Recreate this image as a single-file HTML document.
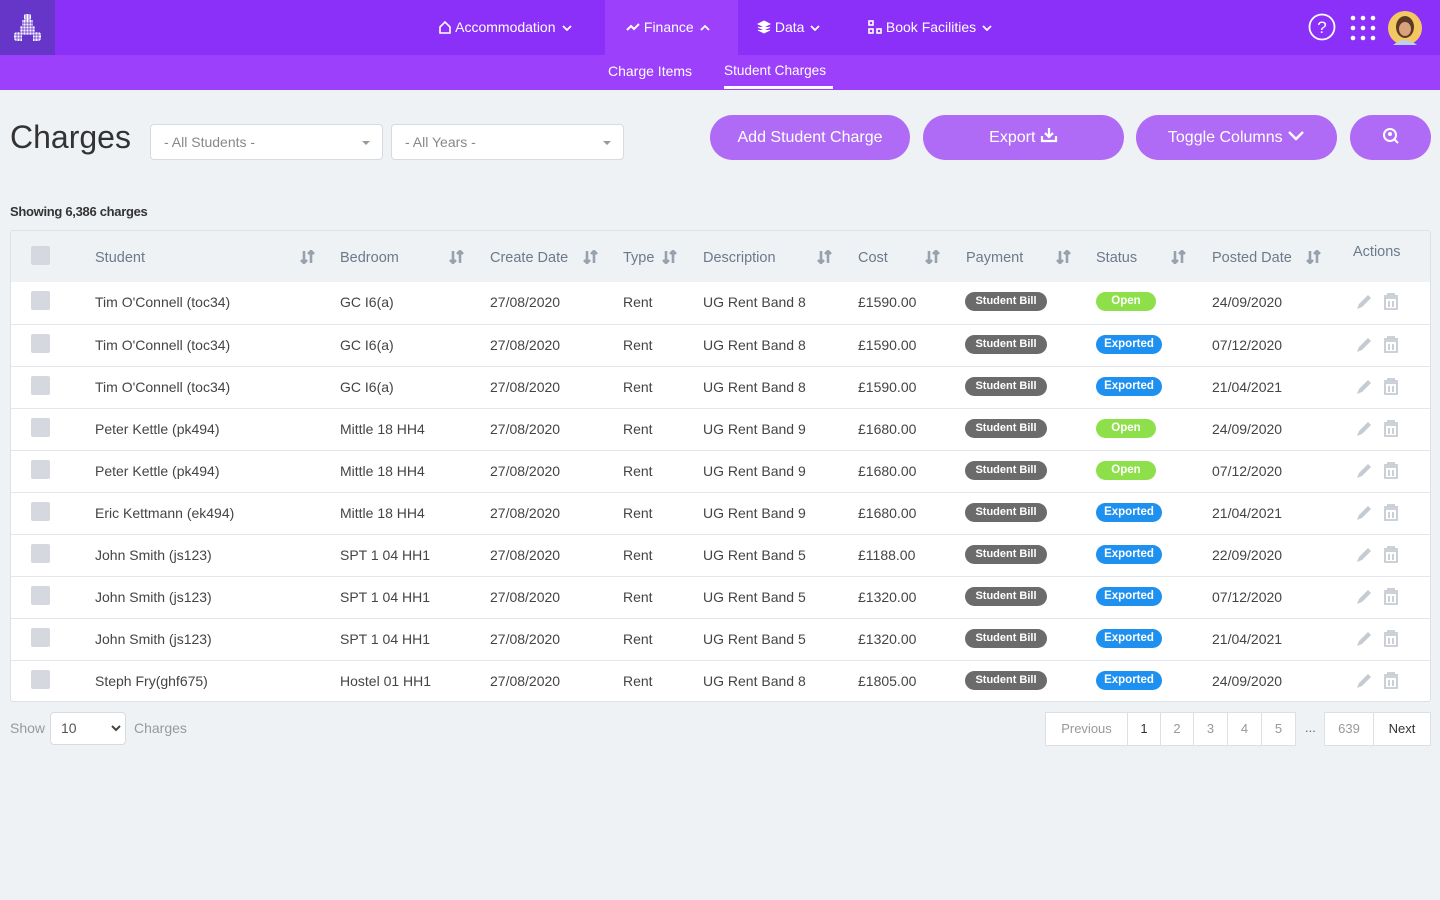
<!DOCTYPE html>
<html><head><meta charset="utf-8"><style>
*{box-sizing:border-box;margin:0;padding:0}
body{width:1440px;height:900px;background:#eff2f5;font-family:"Liberation Sans",sans-serif;color:#444;position:relative;overflow:hidden;font-size:14px}
.top{position:absolute;left:0;top:0;width:1440px;height:55px;background:#8b30f9}
.logo{position:absolute;left:0;top:0;width:55px;height:55px;background:#6636c8}
.nav{position:absolute;top:0;height:55px;line-height:55px;color:#fff;font-size:14px;white-space:nowrap}
.nav .cv{vertical-align:1px;margin-left:6px}
.fin{position:absolute;left:605px;top:0;width:133px;height:55px;background:#9d40fc}
.sub{position:absolute;left:0;top:55px;width:1440px;height:35px;background:#9d40fc}
.sub span{position:absolute;top:8px;color:#fff;font-size:14px}
.abs{position:absolute}
.sel{position:absolute;top:124px;height:36px;background:#fff;border:1px solid #d6dbe0;border-radius:4px;color:#888;font-size:14px;line-height:34px;padding-left:13px}
.sel i{position:absolute;right:12px;top:16px;border:4px solid transparent;border-top:4px solid #999;border-bottom:0}
.btn{position:absolute;top:115px;height:45px;border-radius:23px;background:#b06bf6;color:#fff;font-size:16px;line-height:45px;text-align:center}
.tbl{position:absolute;left:10px;top:230px;width:1421px;height:472px;border:1px solid #dde1e6;border-radius:3px;background:#fff;overflow:hidden}
.hd{position:absolute;left:0;top:0;width:100%;height:51px;background:#eff2f5}
.hd span{position:absolute;top:19px;color:#6c7a8a;font-size:14.5px}
.hd svg{position:absolute;top:19px}
.row{position:absolute;left:0;width:100%;height:42px;border-top:1px solid #e3e6ea}
.row span{position:absolute;top:12px;font-size:14px;color:#444;white-space:nowrap}
.cb{position:absolute;left:20px;width:19px;height:19px;background:#d5d8de;border-radius:2px}
.pb{position:absolute;top:10px;left:954px;width:82px;height:19px;border-radius:10px;background:#6b6b6b;color:#fff;font-size:11px;font-weight:bold;text-align:center;line-height:19px}
.st{position:absolute;top:10px;left:1085px;height:19px;border-radius:10px;color:#fff;font-size:11.5px;font-weight:bold;text-align:center;line-height:19px}
.op{width:60px;background:#8ee04a}
.ex{width:66px;background:#1e90f0}
.ic{position:absolute;top:10px;left:1343px}
.pg{position:absolute;top:712px;height:34px;background:#fff;border:1px solid #dcdfe3;font-size:13px;line-height:32px;text-align:center;color:#999}
</style></head><body>
<svg width="0" height="0" style="position:absolute"><defs><g id="so"><path d="M4 1V13M1 10L4 13L7 10M11 13V1M8 4L11 1L14 4" fill="none" stroke="#97a2ae" stroke-width="2.6"/></g><g id="cd"><path d="M1 1L5 5L9 1" fill="none" stroke="#fff" stroke-width="1.8"/></g><g id="cu"><path d="M1 5L5 1L9 5" fill="none" stroke="#fff" stroke-width="1.8"/></g></defs></svg>
<div class="top"></div>
<div class="logo"><svg width="55" height="55" viewBox="0 0 55 55"><g fill="#fff"><rect x="24" y="14" width="7" height="6" rx="2"/><rect x="22" y="20" width="11" height="6"/><rect x="20" y="26" width="15" height="6"/><rect x="14" y="32" width="27" height="9" rx="3"/></g><rect x="22" y="35" width="11" height="6" fill="#6636c8"/><g stroke="#6636c8" stroke-width="0.8"><path d="M14 23H41M14 26H41M14 29H41M14 32H41M14 35H41M14 38H41M17 14V41M20 14V41M23 14V41M26 14V41M29 14V41M32 14V41M35 14V41M38 14V41"/></g></svg></div>
<div class="fin"></div>
<div class="nav" style="left:438px"><svg width="14" height="14" viewBox="0 0 14 14" style="vertical-align:-2px"><path d="M2 7L7 2L12 7V13H2Z" fill="none" stroke="#fff" stroke-width="1.6"/></svg> Accommodation<svg class="cv" width="10" height="6"><use href="#cd"/></svg></div>
<div class="nav" style="left:626px"><svg width="14" height="10" viewBox="0 0 14 10"><path d="M1 8L5 4L8 7L13 2" fill="none" stroke="#fff" stroke-width="2"/></svg> Finance<svg class="cv" width="10" height="6"><use href="#cu"/></svg></div>
<div class="nav" style="left:757px"><svg width="14" height="14" viewBox="0 0 14 14" style="vertical-align:-2px"><path d="M7 1L13 4L7 7L1 4Z M1 7L7 10L13 7 M1 10L7 13L13 10" fill="#fff" stroke="#fff" stroke-width="1"/></svg> Data<svg class="cv" width="10" height="6"><use href="#cd"/></svg></div>
<div class="nav" style="left:868px"><svg width="14" height="14" viewBox="0 0 14 14" style="vertical-align:-2px"><g fill="none" stroke="#fff" stroke-width="1.6"><rect x="1" y="1" width="4" height="4"/><rect x="1" y="9" width="4" height="4"/><rect x="9" y="9" width="4" height="4"/></g></svg> Book Facilities<svg class="cv" width="10" height="6"><use href="#cd"/></svg></div>
<svg class="abs" style="left:1308px;top:13px" width="28" height="28"><circle cx="14" cy="14" r="12.5" fill="none" stroke="#fff" stroke-width="1.8"/><text x="14" y="20" fill="#fff" font-size="17" text-anchor="middle" font-family="Liberation Sans">?</text></svg>
<svg class="abs" style="left:1350px;top:15px" width="26" height="26"><g fill="#fff"><circle cx="3" cy="3" r="2.3"/><circle cx="13" cy="3" r="2.3"/><circle cx="23" cy="3" r="2.3"/><circle cx="3" cy="13" r="2.3"/><circle cx="13" cy="13" r="2.3"/><circle cx="23" cy="13" r="2.3"/><circle cx="3" cy="23" r="2.3"/><circle cx="13" cy="23" r="2.3"/><circle cx="23" cy="23" r="2.3"/></g></svg>
<svg class="abs" style="left:1388px;top:11px" width="34" height="34"><circle cx="17" cy="17" r="17" fill="#f4c860"/><ellipse cx="17" cy="16" rx="9" ry="11" fill="#5a3a25"/><ellipse cx="17" cy="18" rx="6" ry="7" fill="#d9a27c"/><path d="M5 34Q17 24 29 34Z" fill="#bcd3e3"/></svg>
<div class="sub"><span style="left:608px">Charge Items</span><span style="left:724px;font-size:13.6px">Student Charges</span><div class="abs" style="left:724px;top:31px;width:109px;height:3px;background:#fff"></div></div>

<div class="abs" style="left:10px;top:119px;font-size:32px;color:#333">Charges</div>
<div class="sel" style="left:150px;width:233px">- All Students -<i></i></div>
<div class="sel" style="left:391px;width:233px">- All Years -<i></i></div>
<div class="btn" style="left:710px;width:200px">Add Student Charge</div>
<div class="btn" style="left:923px;width:201px">Export <svg width="18" height="16" viewBox="0 0 18 16" style="vertical-align:-1px"><path d="M9 1V10M5 6L9 10L13 6M2 9V14H16V9" fill="none" stroke="#fff" stroke-width="2.2"/></svg></div>
<div class="btn" style="left:1136px;width:201px">Toggle Columns <svg width="18" height="12" viewBox="0 0 18 12"><path d="M2 2L9 9L16 2" fill="none" stroke="#fff" stroke-width="2.4"/></svg></div>
<div class="btn" style="left:1350px;width:81px"><svg width="18" height="18" viewBox="0 0 18 18" style="vertical-align:-3px"><circle cx="8" cy="8" r="6" fill="none" stroke="#fff" stroke-width="2"/><circle cx="8" cy="7" r="2" fill="#fff"/><path d="M12 12L16 16" stroke="#fff" stroke-width="2"/></svg></div>

<div class="abs" style="left:10px;top:204px;font-size:13px;color:#333;font-weight:bold;letter-spacing:-.3px">Showing 6,386 charges</div>

<div class="tbl">
<div class="hd"><div class="cb" style="top:15px"></div>
<span style="left:84px">Student</span><svg style="left:289px" width="15" height="14"><use href="#so"/></svg>
<span style="left:329px">Bedroom</span><svg style="left:438px" width="15" height="14"><use href="#so"/></svg>
<span style="left:479px">Create Date</span><svg style="left:572px" width="15" height="14"><use href="#so"/></svg>
<span style="left:612px">Type</span><svg style="left:651px" width="15" height="14"><use href="#so"/></svg>
<span style="left:692px">Description</span><svg style="left:806px" width="15" height="14"><use href="#so"/></svg>
<span style="left:847px">Cost</span><svg style="left:914px" width="15" height="14"><use href="#so"/></svg>
<span style="left:955px">Payment</span><svg style="left:1045px" width="15" height="14"><use href="#so"/></svg>
<span style="left:1085px">Status</span><svg style="left:1160px" width="15" height="14"><use href="#so"/></svg>
<span style="left:1201px">Posted Date</span><svg style="left:1295px" width="15" height="14"><use href="#so"/></svg>
<span style="left:1342px;top:13px">Actions</span></div>

<div class="row" style="top:51px;border-top:0"><div class="cb" style="top:9px"></div><span style="left:84px">Tim O'Connell (toc34)</span><span style="left:329px">GC I6(a)</span><span style="left:479px">27/08/2020</span><span style="left:612px">Rent</span><span style="left:692px">UG Rent Band 8</span><span style="left:847px">£1590.00</span><div class="pb">Student Bill</div><div class="st op">Open</div><span style="left:1201px">24/09/2020</span><svg class="ic" width="50" height="20"><path d="M3 17L5 12L14 3L17 6L8 15Z" fill="#c5cbd2"/><path d="M30 4H44M34 4V2H40V4M31 6H43V17H31Z M35 9V15M39 9V15" fill="none" stroke="#c5cbd2" stroke-width="1.8"/></svg></div>
<div class="row" style="top:93px"><div class="cb" style="top:9px"></div><span style="left:84px">Tim O'Connell (toc34)</span><span style="left:329px">GC I6(a)</span><span style="left:479px">27/08/2020</span><span style="left:612px">Rent</span><span style="left:692px">UG Rent Band 8</span><span style="left:847px">£1590.00</span><div class="pb">Student Bill</div><div class="st ex">Exported</div><span style="left:1201px">07/12/2020</span><svg class="ic" width="50" height="20"><path d="M3 17L5 12L14 3L17 6L8 15Z" fill="#c5cbd2"/><path d="M30 4H44M34 4V2H40V4M31 6H43V17H31Z M35 9V15M39 9V15" fill="none" stroke="#c5cbd2" stroke-width="1.8"/></svg></div>
<div class="row" style="top:135px"><div class="cb" style="top:9px"></div><span style="left:84px">Tim O'Connell (toc34)</span><span style="left:329px">GC I6(a)</span><span style="left:479px">27/08/2020</span><span style="left:612px">Rent</span><span style="left:692px">UG Rent Band 8</span><span style="left:847px">£1590.00</span><div class="pb">Student Bill</div><div class="st ex">Exported</div><span style="left:1201px">21/04/2021</span><svg class="ic" width="50" height="20"><path d="M3 17L5 12L14 3L17 6L8 15Z" fill="#c5cbd2"/><path d="M30 4H44M34 4V2H40V4M31 6H43V17H31Z M35 9V15M39 9V15" fill="none" stroke="#c5cbd2" stroke-width="1.8"/></svg></div>
<div class="row" style="top:177px"><div class="cb" style="top:9px"></div><span style="left:84px">Peter Kettle (pk494)</span><span style="left:329px">Mittle 18 HH4</span><span style="left:479px">27/08/2020</span><span style="left:612px">Rent</span><span style="left:692px">UG Rent Band 9</span><span style="left:847px">£1680.00</span><div class="pb">Student Bill</div><div class="st op">Open</div><span style="left:1201px">24/09/2020</span><svg class="ic" width="50" height="20"><path d="M3 17L5 12L14 3L17 6L8 15Z" fill="#c5cbd2"/><path d="M30 4H44M34 4V2H40V4M31 6H43V17H31Z M35 9V15M39 9V15" fill="none" stroke="#c5cbd2" stroke-width="1.8"/></svg></div>
<div class="row" style="top:219px"><div class="cb" style="top:9px"></div><span style="left:84px">Peter Kettle (pk494)</span><span style="left:329px">Mittle 18 HH4</span><span style="left:479px">27/08/2020</span><span style="left:612px">Rent</span><span style="left:692px">UG Rent Band 9</span><span style="left:847px">£1680.00</span><div class="pb">Student Bill</div><div class="st op">Open</div><span style="left:1201px">07/12/2020</span><svg class="ic" width="50" height="20"><path d="M3 17L5 12L14 3L17 6L8 15Z" fill="#c5cbd2"/><path d="M30 4H44M34 4V2H40V4M31 6H43V17H31Z M35 9V15M39 9V15" fill="none" stroke="#c5cbd2" stroke-width="1.8"/></svg></div>
<div class="row" style="top:261px"><div class="cb" style="top:9px"></div><span style="left:84px">Eric Kettmann (ek494)</span><span style="left:329px">Mittle 18 HH4</span><span style="left:479px">27/08/2020</span><span style="left:612px">Rent</span><span style="left:692px">UG Rent Band 9</span><span style="left:847px">£1680.00</span><div class="pb">Student Bill</div><div class="st ex">Exported</div><span style="left:1201px">21/04/2021</span><svg class="ic" width="50" height="20"><path d="M3 17L5 12L14 3L17 6L8 15Z" fill="#c5cbd2"/><path d="M30 4H44M34 4V2H40V4M31 6H43V17H31Z M35 9V15M39 9V15" fill="none" stroke="#c5cbd2" stroke-width="1.8"/></svg></div>
<div class="row" style="top:303px"><div class="cb" style="top:9px"></div><span style="left:84px">John Smith (js123)</span><span style="left:329px">SPT 1 04 HH1</span><span style="left:479px">27/08/2020</span><span style="left:612px">Rent</span><span style="left:692px">UG Rent Band 5</span><span style="left:847px">£1188.00</span><div class="pb">Student Bill</div><div class="st ex">Exported</div><span style="left:1201px">22/09/2020</span><svg class="ic" width="50" height="20"><path d="M3 17L5 12L14 3L17 6L8 15Z" fill="#c5cbd2"/><path d="M30 4H44M34 4V2H40V4M31 6H43V17H31Z M35 9V15M39 9V15" fill="none" stroke="#c5cbd2" stroke-width="1.8"/></svg></div>
<div class="row" style="top:345px"><div class="cb" style="top:9px"></div><span style="left:84px">John Smith (js123)</span><span style="left:329px">SPT 1 04 HH1</span><span style="left:479px">27/08/2020</span><span style="left:612px">Rent</span><span style="left:692px">UG Rent Band 5</span><span style="left:847px">£1320.00</span><div class="pb">Student Bill</div><div class="st ex">Exported</div><span style="left:1201px">07/12/2020</span><svg class="ic" width="50" height="20"><path d="M3 17L5 12L14 3L17 6L8 15Z" fill="#c5cbd2"/><path d="M30 4H44M34 4V2H40V4M31 6H43V17H31Z M35 9V15M39 9V15" fill="none" stroke="#c5cbd2" stroke-width="1.8"/></svg></div>
<div class="row" style="top:387px"><div class="cb" style="top:9px"></div><span style="left:84px">John Smith (js123)</span><span style="left:329px">SPT 1 04 HH1</span><span style="left:479px">27/08/2020</span><span style="left:612px">Rent</span><span style="left:692px">UG Rent Band 5</span><span style="left:847px">£1320.00</span><div class="pb">Student Bill</div><div class="st ex">Exported</div><span style="left:1201px">21/04/2021</span><svg class="ic" width="50" height="20"><path d="M3 17L5 12L14 3L17 6L8 15Z" fill="#c5cbd2"/><path d="M30 4H44M34 4V2H40V4M31 6H43V17H31Z M35 9V15M39 9V15" fill="none" stroke="#c5cbd2" stroke-width="1.8"/></svg></div>
<div class="row" style="top:429px"><div class="cb" style="top:9px"></div><span style="left:84px">Steph Fry(ghf675)</span><span style="left:329px">Hostel 01 HH1</span><span style="left:479px">27/08/2020</span><span style="left:612px">Rent</span><span style="left:692px">UG Rent Band 8</span><span style="left:847px">£1805.00</span><div class="pb">Student Bill</div><div class="st ex">Exported</div><span style="left:1201px">24/09/2020</span><svg class="ic" width="50" height="20"><path d="M3 17L5 12L14 3L17 6L8 15Z" fill="#c5cbd2"/><path d="M30 4H44M34 4V2H40V4M31 6H43V17H31Z M35 9V15M39 9V15" fill="none" stroke="#c5cbd2" stroke-width="1.8"/></svg></div>
</div>

<div class="abs" style="left:10px;top:720px;font-size:14px;color:#999">Show</div>
<div class="abs" style="left:50px;top:712px;width:76px;height:33px;background:#fff;border:1px solid #d6dbe0;border-radius:4px;font-size:14px;line-height:31px;padding-left:10px;color:#555">10<svg class="abs" style="left:60px;top:12px" width="10" height="7"><path d="M1 1L5 5L9 1" fill="none" stroke="#444" stroke-width="2"/></svg></div>
<div class="abs" style="left:134px;top:720px;font-size:14px;color:#999">Charges</div>

<div class="pg" style="left:1045px;width:83px">Previous</div>
<div class="pg" style="left:1127px;width:34px;color:#333">1</div>
<div class="pg" style="left:1160px;width:34px">2</div>
<div class="pg" style="left:1193px;width:35px">3</div>
<div class="pg" style="left:1227px;width:35px">4</div>
<div class="pg" style="left:1261px;width:35px">5</div>
<div class="abs" style="left:1305px;top:720px;color:#666;font-size:13px">...</div>
<div class="pg" style="left:1324px;width:50px">639</div>
<div class="pg" style="left:1373px;width:58px;color:#333">Next</div>
</body></html>
